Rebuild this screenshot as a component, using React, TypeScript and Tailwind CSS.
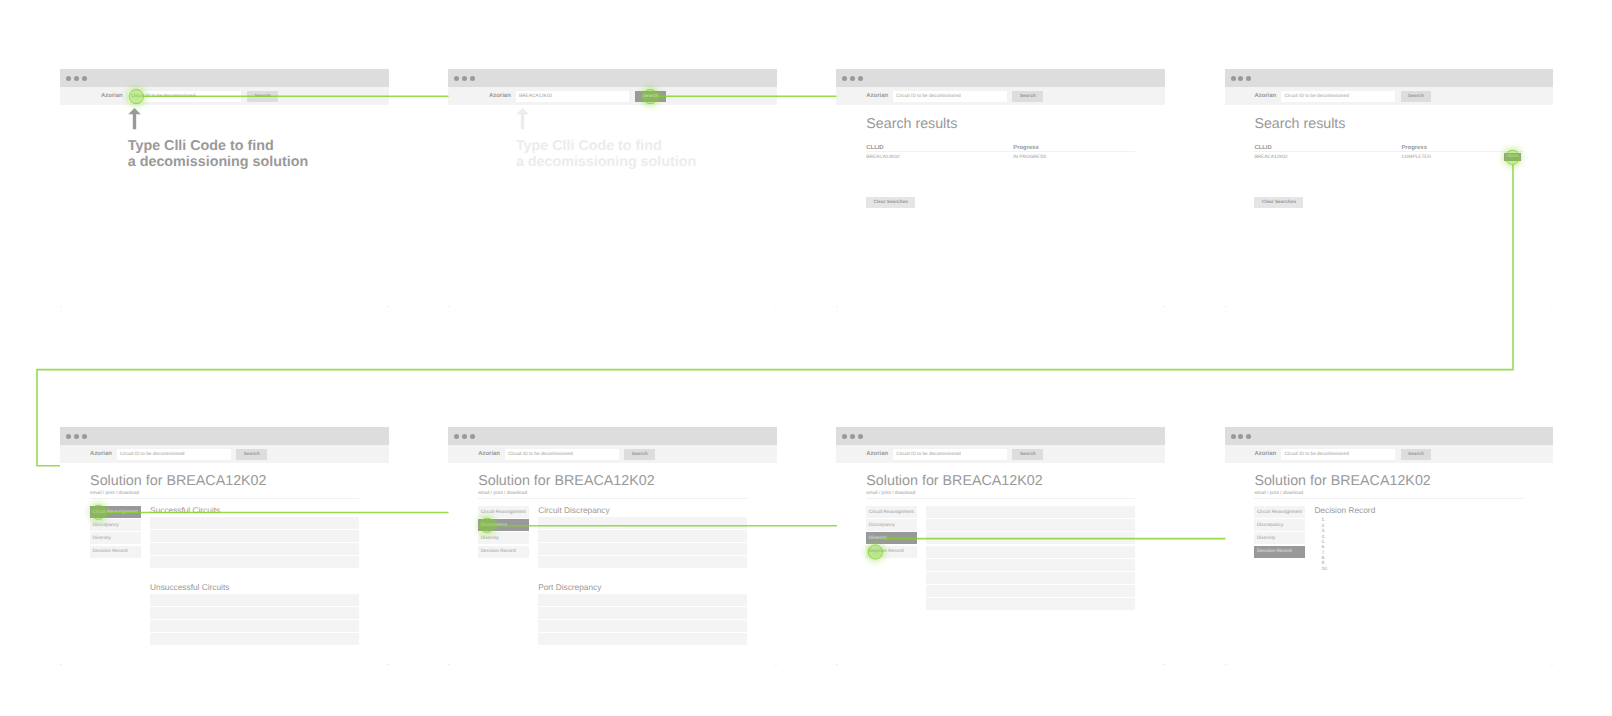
import type { ReactNode } from "react";

const NAV = ["Circuit Reassignment", "Discrepancy", "Diversity", "Decision Record"];

type BarProps = { value?: string; wide?: boolean; active?: boolean };

function Toolbar({ value = "Circuit ID to be decomissioned", wide, active }: BarProps) {
  return (
    <div className={`flex h-[17.5px] items-center bg-[#f3f3f3] pt-[0.7px] ${wide ? "pl-[40.6px]" : "pl-[29.8px]"}`}>
      <span className="w-[27px] pt-[2.6px] text-[5.95px] font-bold">Azorian</span>
      <span className="flex h-[11px] w-[113.5px] items-center bg-white pl-[3px] pt-[2.6px]">{value}</span>
      <span
        className={`ml-[5.7px] flex h-[11px] w-[30.7px] items-center justify-center pt-[2.6px] font-bold ${
          active ? "bg-[#999] text-[#e6e6e6]" : "bg-[#ddd]"
        }`}
      >
        Search
      </span>
    </div>
  );
}

function Screen({ bar, children }: { bar?: BarProps; children: ReactNode }) {
  return (
    <section className="flex h-[238px] w-[328.5px] shrink-0 flex-col">
      <div className="flex h-[18px] shrink-0 items-center gap-[2.8px] bg-[#ddd] pl-[6px]">
        <i className="size-[5px] rounded-full bg-[#999]" />
        <i className="size-[5px] rounded-full bg-[#999]" />
        <i className="size-[5px] rounded-full bg-[#999]" />
      </div>
      <Toolbar {...bar} />
      <div className="flex-1">{children}</div>
      <div className="flex justify-between">
        <i className="h-px w-[2px] bg-[#eee]" />
        <i className="h-px w-[2px] bg-[#eee]" />
      </div>
    </section>
  );
}

function Prompt({ faded }: { faded?: boolean }) {
  return (
    <div className={`pl-[67.5px] pt-[3px] ${faded ? "text-[#ececec]" : "text-[#999]"}`}>
      <svg className="h-[22px] w-[13px]" viewBox="0 0 13 22" fill="currentColor">
        <path d="M6.5 0L12.7 6.2H8.2V21.3H4.8V6.2H0.3Z" />
      </svg>
      <p className="mt-[8px] text-[14.3px] font-bold leading-[16px]">
        Type Clli Code to find
        <br />a decomissioning solution
      </p>
    </div>
  );
}

function Results({ progress, open }: { progress: string; open?: boolean }) {
  return (
    <div className="ml-[29.8px] w-[268.6px] pt-[11.5px]">
      <h1 className="text-[14.25px] leading-[17px]">Search results</h1>
      <div className="mt-[10.5px] flex h-[8px] items-end border-b border-[#f1f1f1] text-[5.9px] font-bold leading-[4.4px]">
        <span className="w-[147px]">CLLID</span>
        <span>Progress</span>
      </div>
      <div className="flex h-[12px] items-center">
        <span className="w-[147px] pt-[2px]">BREACA12K02</span>
        <span className="flex-1 pt-[2px]">{progress}</span>
        {open && (
          <span className="mb-[1.4px] mr-[2px] flex h-[8px] w-[17px] items-center justify-center bg-[#999] pt-[2px] text-[#eee]">
            Open
          </span>
        )}
      </div>
      <div className="mt-[33px] flex h-[11px] w-[49px] items-center justify-center bg-[#e5e5e5] pt-[2px] font-bold">
        Clear Searches
      </div>
    </div>
  );
}

function Rows({ count }: { count: number }) {
  return (
    <div className="flex flex-col gap-[1.1px]">
      {Array.from({ length: count }, (_, i) => (
        <div key={i} className="h-[12px] bg-[#f4f4f4]" />
      ))}
    </div>
  );
}

function Solution({ selected, children }: { selected: number; children: ReactNode }) {
  return (
    <div className="ml-[29.8px] w-[268.6px] pt-[10.5px]">
      <h1 className="text-[14.3px] leading-[17px]">Solution for BREACA12K02</h1>
      <div className="h-[9.3px] border-b border-[#f1f1f1] pt-px leading-[6px]">email / print / download</div>
      <div className="mt-[7px] flex">
        <ul className="mr-[9px] flex w-[51px] shrink-0 flex-col gap-[1.1px]">
          {NAV.map((item, i) => (
            <li
              key={item}
              className={`flex h-[12px] items-center pl-[2.5px] pt-[2px] ${
                i === selected ? "bg-[#999] text-[#e6e6e6]" : "bg-[#f4f4f4]"
              }`}
            >
              {item}
            </li>
          ))}
        </ul>
        <div className="w-[209px]">{children}</div>
      </div>
    </div>
  );
}

function Group({ title }: { title: string }) {
  return (
    <div className="mb-[15px]">
      <h2 className="h-[10.7px] text-[8.3px] leading-[9.6px]">{title}</h2>
      <Rows count={4} />
    </div>
  );
}

const TAPS = [
  [136.3, 96.6],
  [650.3, 96.6],
  [1512.5, 157.3],
  [98.5, 512.3],
  [487, 525.3],
  [875.3, 552],
];

// Lines and tap marks that lead from one screen to the next
function Flow() {
  return (
    <svg className="pointer-events-none absolute inset-0" width="1612" height="716" fill="none">
      <defs>
        <filter id="glow" x="-100%" y="-100%" width="300%" height="300%">
          <feGaussianBlur stdDeviation="3" />
        </filter>
      </defs>
      {TAPS.map(([x, y]) => (
        <g key={`${x}-${y}`}>
          <circle cx={x} cy={y} r="9.5" fill="#7ed321" fillOpacity="0.42" filter="url(#glow)" />
          <circle cx={x} cy={y} r="7.1" fill="#7ed321" fillOpacity="0.15" stroke="#7ed321" strokeOpacity="0.75" />
        </g>
      ))}
      <g stroke="#7ed321" strokeOpacity="0.8" strokeWidth="1.6">
        <path d="M143.5 96.3H448.5" />
        <path d="M657.5 96.3H836.5" />
        <path d="M1513 164.5V369.6H37V465.8H60" />
        <path d="M105.5 512.5H448.5" />
        <path d="M494 525.8H837" />
        <path d="M883 538.6H1225.5" />
      </g>
    </svg>
  );
}

export default function App() {
  return (
    <main className="relative h-[716px] w-[1612px] overflow-hidden bg-white pl-[60.3px] pt-[69px] font-['Liberation_Sans',Arial,sans-serif] text-[4.76px] leading-none text-[#999] [text-rendering:geometricPrecision]">
      <div className="flex gap-[59.6px]">
        <Screen bar={{ wide: true }}>
          <Prompt />
        </Screen>
        <Screen bar={{ wide: true, value: "BREACA12K02", active: true }}>
          <Prompt faded />
        </Screen>
        <Screen>
          <Results progress="IN PROGRESS" />
        </Screen>
        <Screen>
          <Results progress="COMPLETED" open />
        </Screen>
      </div>
      <div className="mt-[120px] flex gap-[59.6px]">
        <Screen>
          <Solution selected={0}>
            <Group title="Successful Circuits" />
            <Group title="Unsuccessful Circuits" />
          </Solution>
        </Screen>
        <Screen>
          <Solution selected={1}>
            <Group title="Circuit Discrepancy" />
            <Group title="Port Discrepancy" />
          </Solution>
        </Screen>
        <Screen>
          <Solution selected={2}>
            <Rows count={8} />
          </Solution>
        </Screen>
        <Screen>
          <Solution selected={3}>
            <h2 className="text-[8.3px] leading-[9.6px]">Decision Record</h2>
            <ol className="mt-[2.5px] pl-[7px] leading-[5.38px]">
              {Array.from({ length: 10 }, (_, i) => (
                <li key={i}>{i + 1}.</li>
              ))}
            </ol>
          </Solution>
        </Screen>
      </div>
      <Flow />
    </main>
  );
}
